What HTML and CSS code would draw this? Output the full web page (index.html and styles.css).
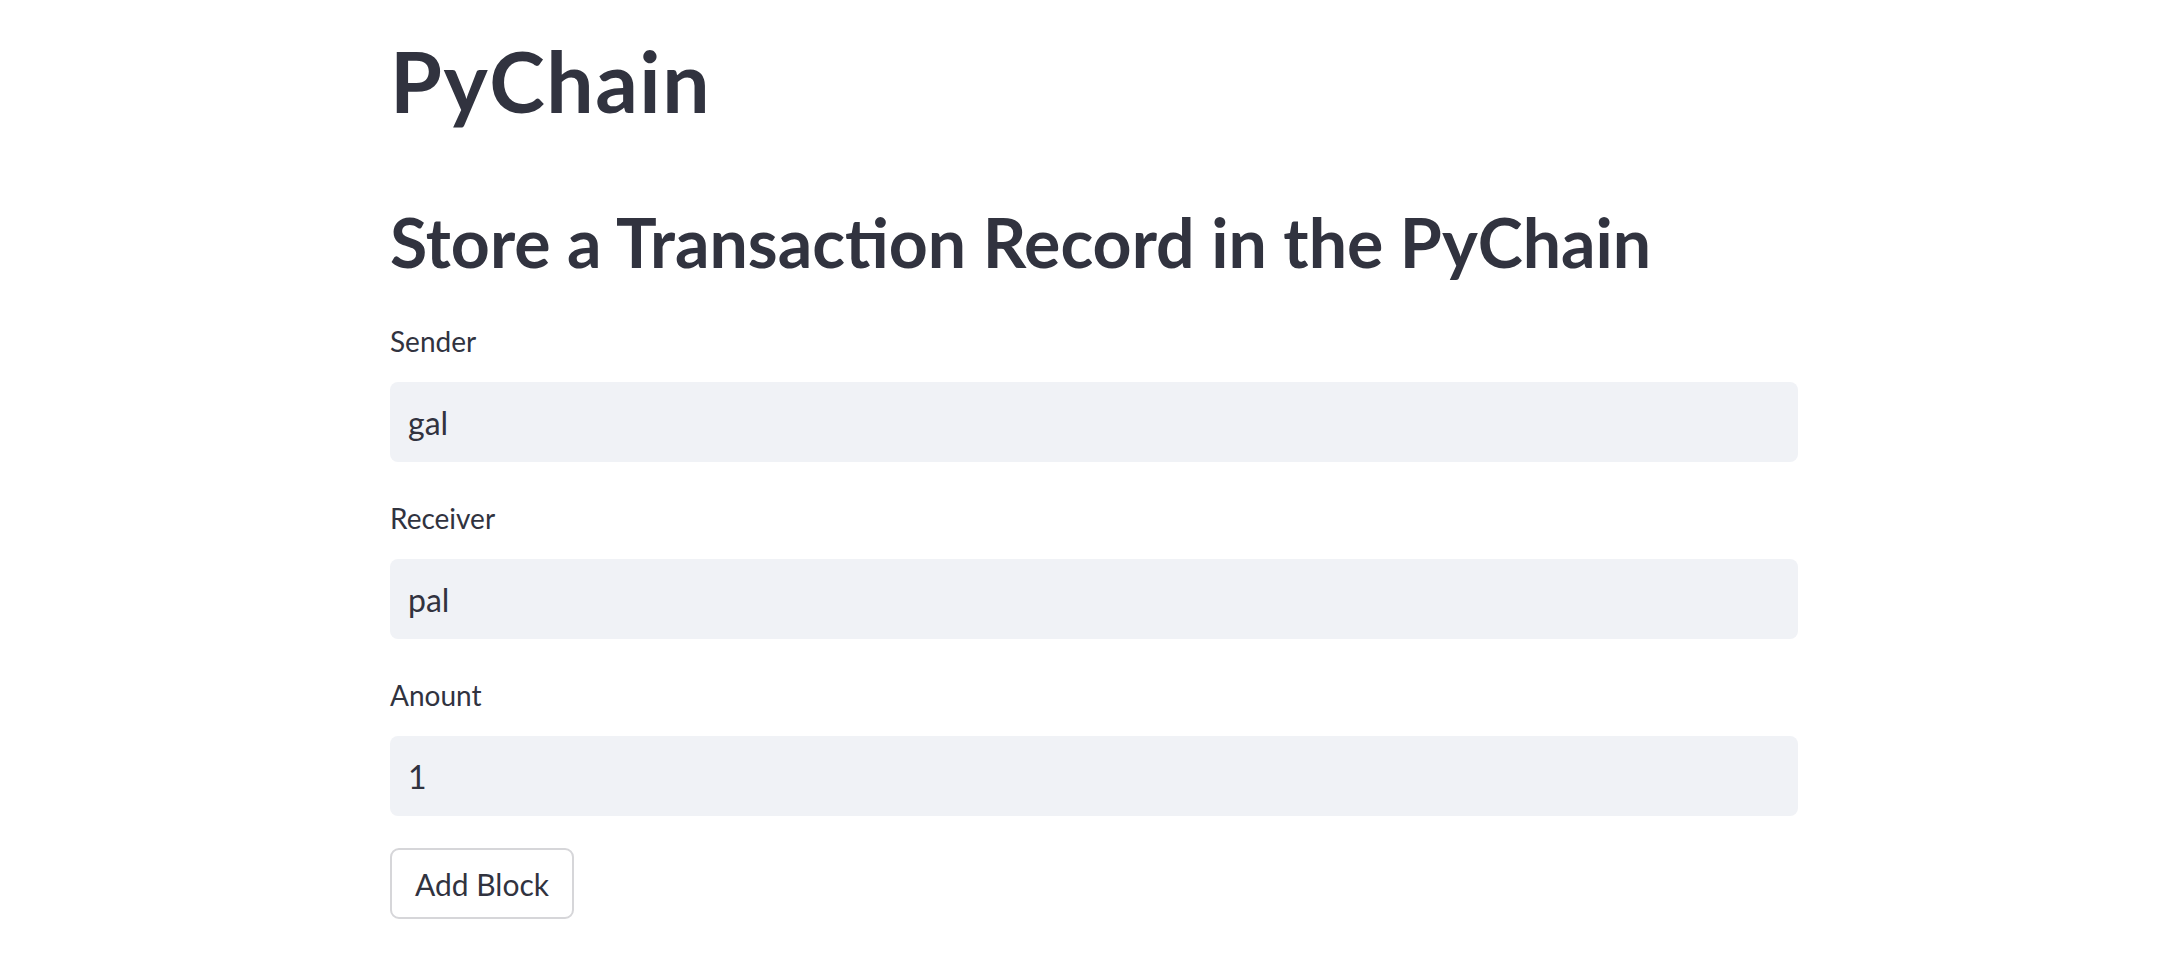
FILE: index.html
```html
<!DOCTYPE html>
<html>
<head>
<meta charset="utf-8">
<link rel="stylesheet" href="styles.css">
</head>
<body>
<main class="page">
  <h1 class="title">PyChain</h1>
  <h2 class="subtitle">Store a Transaction Record in the PyChain</h2>
  <form class="form">
    <div class="field">
      <label class="label">Sender</label>
      <div class="input">gal</div>
    </div>
    <div class="field">
      <label class="label">Receiver</label>
      <div class="input">pal</div>
    </div>
    <div class="field">
      <label class="label">Anount</label>
      <div class="input">1</div>
    </div>
    <div class="actions">
      <button type="button" class="button">Add Block</button>
    </div>
  </form>
</main>
</body>
</html>
```

FILE: styles.css
```css
html, body {
  margin: 0;
  padding: 0;
  background: #ffffff;
}
body {
  font-family: Lato, "Source Sans Pro", "Open Sans", sans-serif;
  color: #31333f;
}
.page {
  width: 1408px;
  padding-left: 390px;
  padding-top: 33px;
}
.title {
  margin: 0;
  font-size: 84px;
  line-height: 96px;
  font-weight: 700;
  letter-spacing: 1.5px;
  color: #31333f;
}
.subtitle {
  margin: 70px 0 0 0;
  font-size: 68px;
  line-height: 86px;
  font-weight: 700;
  color: #31333f;
}
.form {
  margin-top: 39px;
  display: flex;
  flex-direction: column;
  gap: 39px;
}
.field {
  display: flex;
  flex-direction: column;
  gap: 24px;
}
.label {
  font-size: 28px;
  line-height: 34px;
  color: #31333f;
}
.input {
  box-sizing: border-box;
  height: 80px;
  border-radius: 8px;
  background: #f0f2f6;
  padding: 0 18px;
  display: flex;
  align-items: center;
  font-size: 32px;
  color: #31333f;
}
.actions {
  margin-top: -7px;
}
.button {
  box-sizing: border-box;
  height: 71px;
  width: 184px;
  border: 2px solid #d6d6d9;
  border-radius: 9px;
  background: #ffffff;
  font-family: inherit;
  font-size: 30px;
  color: #31333f;
  padding: 0;
}
```
